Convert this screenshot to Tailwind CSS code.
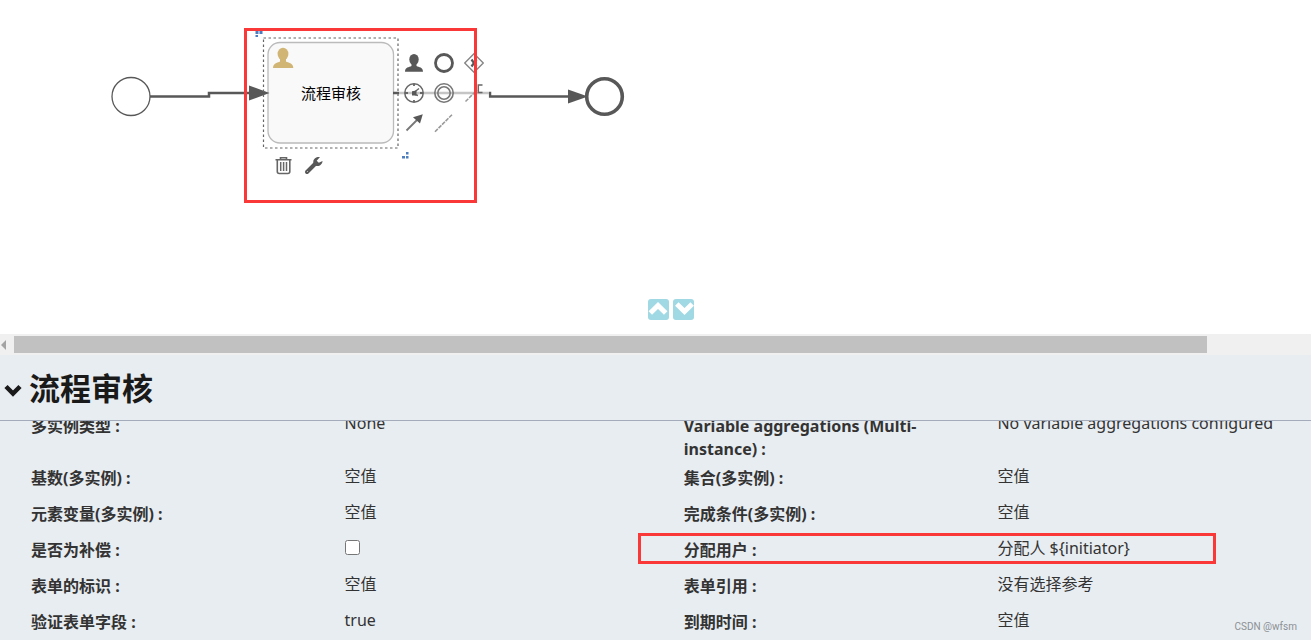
<!DOCTYPE html>
<html lang="zh-CN">
<head>
  <meta charset="UTF-8" />
  <meta name="viewport" content="width=device-width, initial-scale=1.0" />
  <title>流程审核</title>
  <script src="https://cdn.jsdelivr.net/npm/@tailwindcss/browser@4"></script>
</head>
<body class="h-screen flex flex-col overflow-hidden bg-white text-[#333] text-base font-['Noto_Sans','Noto_Sans_CJK_SC',sans-serif]">

  <!-- Process canvas -->
  <main class="relative h-[334px] shrink-0 overflow-hidden flex flex-col justify-end">
    <svg class="absolute left-0 top-0" width="640" height="220" viewBox="0 0 640 220" fill="none">
      <circle cx="131" cy="96.5" r="19" stroke="#585858" stroke-width="1.3" />
      <path d="M150 96.5H209V93H250" stroke="#585858" stroke-width="2.5" />
      <rect x="268" y="42.5" width="125.5" height="100.5" rx="12" fill="#f9f9f9" stroke="#bbb" stroke-width="1.3" />
      <path d="M249 85.5L269.500 93L249 100.5Z" fill="#585858" />
      <path d="M393 93H490V96.5H569" stroke="#585858" stroke-width="2.5" />
      <path d="M568 89.5L588 96.5L568 103.5Z" fill="#585858" />
      <circle cx="604.5" cy="96.5" r="17.800" fill="#fff" stroke="#585858" stroke-width="3.6" />
      <rect x="263.5" y="38" width="134.5" height="110" stroke="#666" stroke-width="1.2" stroke-dasharray="2.5 2.5" />
      <g fill="#d1b575">
        <ellipse cx="283" cy="54" rx="5.4" ry="6.2" />
        <path d="M280 57h6v4.500c2 1.300 7.300 1.500 7.300 6.500h-20.300c0-5 5-5.200 7-6.500z" />
      </g>
      <path d="M255.500 31h3v3h-3zM259.500 31h3v3h-3zM255.500 35h2.500v2h-2.500zM402 156h3v2.500h-3zM406 156h2.500v2.500h-2.500zM406 152h2.500v2.500h-2.500z" fill="#4d7ebf" />
      <text x="331" y="99" text-anchor="middle" font-size="15" fill="#000">流程审核</text>
    </svg>

    <!-- Quick add pad -->
    <div class="absolute left-[399px] top-[53px] pl-[5px] pr-[5px] grid grid-cols-3 gap-[10px] bg-white/65">
      <button class="size-5" aria-label="用户任务">
        <svg viewBox="0 0 20 20" fill="#585858"><ellipse cx="10" cy="6.5" rx="4.700" ry="5.500" /><path d="M7.500 9h5v4c2.500 1.300 6.500 1 6.500 5.800H1c0-4.800 4-4.500 6.500-5.800z" /></svg>
      </button>
      <button class="size-5" aria-label="结束事件">
        <svg viewBox="0 0 20 20" fill="none"><circle cx="10" cy="10" r="8.500" stroke="#585858" stroke-width="2.800" /></svg>
      </button>
      <button class="size-5" aria-label="排他网关">
        <svg viewBox="0 0 20 20" fill="none" stroke="#858585"><path d="M10 .7L19.300 10L10 19.300L.7 10Z" stroke-width="1.400" /><path d="M7.500 6.500L12.500 13.500M12.500 6.500L7.500 13.500" stroke="#585858" stroke-width="2.200" /></svg>
      </button>
      <button class="size-5" aria-label="定时事件">
        <svg viewBox="0 0 20 20" fill="none" stroke="#666"><circle cx="10" cy="10" r="9.200" stroke-width="1.500" /><path d="M10 1v2M10 17V19M1 10h3M16 10H19" stroke-width="1.800" /><path d="M10.500 9L15 5.500M11 11.500L14 12.500" stroke-width="1.400" /><path d="M8 8.200L12.500 7.500V12.500H8Z" fill="#585858" stroke="none" /></svg>
      </button>
      <button class="size-5" aria-label="中间事件">
        <svg viewBox="0 0 20 20" fill="none" stroke="#777" stroke-width="1.600"><circle cx="10" cy="10" r="9.200" /><circle cx="10" cy="10" r="6.200" /></svg>
      </button>
      <button class="size-5" aria-label="文本注释">
        <svg viewBox="0 0 20 20" fill="none" stroke="#666"><path d="M1.500 18.500L13 7" stroke="#999" stroke-width="1.500" stroke-dasharray="4 1" /><path d="M18.500 2H14.300V9.500H18.500" stroke-width="1.500" /></svg>
      </button>
      <button class="size-5" aria-label="顺序流">
        <svg viewBox="0 0 20 20"><path d="M2.500 17.500L13 7" stroke="#777" stroke-width="1.800" /><path d="M18.800 1.200L16 10.500L9 4.200Z" fill="#585858" /></svg>
      </button>
      <button class="size-5" aria-label="关联">
        <svg viewBox="0 0 20 20"><path d="M1 18.700L18.700 1" stroke="#999" stroke-width="1.600" stroke-dasharray="4 1" /></svg>
      </button>
    </div>

    <div class="absolute left-[274px] top-[155px] flex gap-[10px]">
      <button class="size-5" aria-label="删除">
        <svg viewBox="0 0 20 20" fill="none" stroke="#666"><path d="M1.500 4.800h16M6.500 4.500V2.800h6V4.500" stroke-width="1.600" /><path d="M3.300 5v11.500q0 2 2 2h8.500q2 0 2-2V5" stroke-width="1.600" /><path d="M6.700 7v9M9.600 7v9M12.500 7v9" stroke-width="1.500" /></svg>
      </button>
      <button class="size-5" aria-label="更改类型">
        <svg viewBox="0 0 20 20"><path d="M3 17L11.500 8.500" stroke="#585858" stroke-width="4" stroke-linecap="round" /><path d="M16 2C12.500 1.500 9.500 3.500 9.300 6.500L9.500 10.500L13 11C16 11.200 18.500 9 18.500 6L14.800 7.800L12.700 5.800Z" fill="#585858" /><circle cx="3.500" cy="16.500" r=".6" fill="#ccc" /></svg>
      </button>
    </div>

    <div class="absolute left-[244px] top-[28px] w-[233px] h-[175px] border-3 border-[#fb3838]"></div>

    <div class="flex justify-center gap-1 pl-[31px] pb-[14px]">
      <button class="size-[21px] rounded-[3px] bg-[#a0d8e4]" aria-label="收起">
        <svg viewBox="0 0 21 21" fill="none" stroke="#fff" stroke-width="5"><path d="M2.300 14L10 6.500L17.700 14" /></svg>
      </button>
      <button class="size-[21px] rounded-[3px] bg-[#a0d8e4]" aria-label="展开">
        <svg viewBox="0 0 21 21" fill="none" stroke="#fff" stroke-width="5"><path d="M3.800 5L11.500 12.500L19.200 5" /></svg>
      </button>
    </div>
  </main>

  <!-- Horizontal scrollbar -->
  <div class="h-[21px] shrink-0 flex items-center bg-[#f0f0f0]">
    <svg class="w-[14px] h-[10px] shrink-0" viewBox="0 0 14 10"><path d="M6 0V10L1 5Z" fill="#a3a3a3" /></svg>
    <div class="w-[91%] h-[17px] bg-[#c1c1c1]"></div>
  </div>

  <!-- Properties -->
  <section class="flex-1 min-h-0 flex flex-col bg-[#e8edf1]">
    <header class="h-[66px] shrink-0 flex items-center gap-[7px] pl-1 border-b border-[#a4acbb]">
      <svg class="w-[18px] h-[14px] mt-1" viewBox="0 0 18 14" fill="none" stroke="#1a1a1a" stroke-width="4.500"><path d="M2 3.500L9 10.500L16 3.500" /></svg>
      <h1 class="text-[31px] leading-10 font-bold text-[#1a1a1a]">流程审核</h1>
    </header>

    <div class="flex-1 min-h-0 overflow-hidden">
      <dl class="-mt-[9px] pl-[31px] grid grid-cols-[24.5%_26.5%_24.5%_24.5%] auto-rows-[36px] leading-[23px]">
        <dt class="h-[53px] pt-[3px] font-bold">多实例类型 :</dt>
        <dd>None</dd>
        <dt class="pt-[3px] pr-10 font-bold">Variable aggregations (Multi-instance) :</dt>
        <dd class="whitespace-nowrap">No variable aggregations configured</dd>
      </dl>
      <dl class="mt-[17px] pl-[31px] grid grid-cols-[24.5%_26.5%_24.5%_24.5%] auto-rows-[36px] leading-[23px]">
        <dt class="pt-[2px] font-bold">基数(多实例) :</dt>
        <dd>空值</dd>
        <dt class="pt-[2px] font-bold">集合(多实例) :</dt>
        <dd>空值</dd>

        <dt class="pt-[2px] font-bold">元素变量(多实例) :</dt>
        <dd>空值</dd>
        <dt class="pt-[2px] font-bold">完成条件(多实例) :</dt>
        <dd>空值</dd>

        <dt class="pt-[2px] font-bold"><label for="compensation">是否为补偿 :</label></dt>
        <dd class="pt-[3px]"><input id="compensation" type="checkbox" class="block size-[15px]" /></dd>
        <dt class="relative pt-[2px] font-bold">
          分配用户 :
          <div class="absolute -left-[46px] -top-1 w-[578px] h-[31px] border-3 border-[#fb3838]"></div>
        </dt>
        <dd>分配人 ${initiator}</dd>

        <dt class="pt-[2px] font-bold">表单的标识 :</dt>
        <dd>空值</dd>
        <dt class="pt-[2px] font-bold">表单引用 :</dt>
        <dd>没有选择参考</dd>

        <dt class="pt-[2px] font-bold">验证表单字段 :</dt>
        <dd>true</dd>
        <dt class="pt-[2px] font-bold">到期时间 :</dt>
        <dd>空值</dd>
      </dl>
    </div>
  </section>

  <p class="absolute right-[14px] bottom-[6px] text-[10px] leading-[14px] text-[#8b9095] font-['Roboto',sans-serif]">CSDN @wfsm</p>
</body>
</html>
